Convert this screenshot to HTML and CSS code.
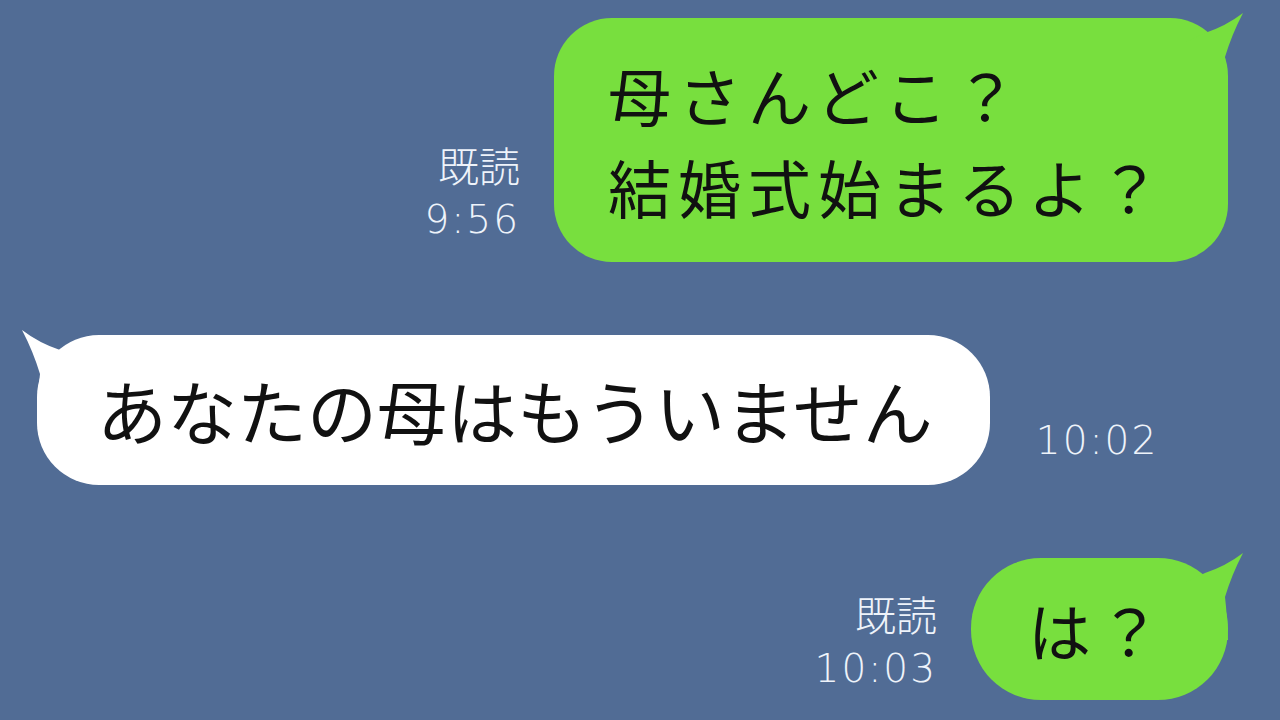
FILE: index.html
```html
<!DOCTYPE html>
<html lang="ja">
<head>
    <meta charset="UTF-8">
    <meta name="viewport" content="width=device-width, initial-scale=1.0">
    <title>トーク</title>
    <link rel="stylesheet" href="styles.css">
</head>
<body>
    <main class="chat">
        <div class="row row-out">
            <div class="meta meta-first">
                <span>既読</span>
                <span>9:56</span>
            </div>
            <div class="bubble bubble-out bubble-big">
                <svg class="tail tail-right" viewBox="0 0 70 90" width="70" height="90">
                    <path d="M10 30 L29 21 Q50 14 67 1 Q56 22 49 45 Q51 62 52 88 L10 88 Z"/>
                </svg>
                母さんどこ？<br>結婚式始まるよ？
            </div>
        </div>

        <div class="row row-in">
            <div class="bubble bubble-in">
                <svg class="tail tail-left" viewBox="0 0 70 90" width="70" height="90">
                    <path d="M60 30 L41 21 Q20 14 3 1 Q14 22 21 45 Q19 62 18 88 L60 88 Z"/>
                </svg>
                あなたの母はもういません
            </div>
            <div class="meta meta-in">10:02</div>
        </div>

        <div class="row row-out">
            <div class="meta meta-last">
                <span>既読</span>
                <span>10:03</span>
            </div>
            <div class="bubble bubble-out bubble-small">
                <svg class="tail tail-right" viewBox="0 0 70 90" width="70" height="90">
                    <path d="M10 30 L29 21 Q50 14 67 1 Q56 22 49 45 Q51 62 52 88 L10 88 Z"/>
                </svg>
                は？
            </div>
        </div>
    </main>
</body>
</html>
```

FILE: styles.css
```css
body {
    margin: 0;
    height: 720px;
    overflow: hidden;
    background-color: #516c95;
    font-family: "Noto Sans CJK JP", "Noto Sans", sans-serif;
}
.chat {
    display: flex;
    flex-direction: column;
    gap: 73px;
    padding-top: 18px;
}
.row {
    display: flex;
    align-items: flex-end;
}
.row-out {
    justify-content: flex-end;
    gap: 34px;
    padding-right: 52px;
}
.row-in {
    gap: 46px;
    padding-left: 37px;
}
.meta {
    display: flex;
    flex-direction: column;
    align-items: flex-end;
    color: #eef3fa;
    font-family: "DejaVu Sans", "Noto Sans CJK JP", sans-serif;
    font-weight: 200;
    font-size: 39px;
    letter-spacing: 2px;
    line-height: 52px;
}
.meta span:first-child {
    font-size: 41px;
    letter-spacing: 0;
}
.meta-first {
    margin-bottom: 16px;
}
.meta-in {
    margin-bottom: 18px;
}
.meta-last {
    margin-bottom: 5px;
}
.bubble {
    position: relative;
    color: #111;
}
.bubble-out {
    background-color: #78df3e;
    font-size: 63px;
    letter-spacing: 7px;
    line-height: 92px;
}
.bubble-big {
    padding: 30px 60px 30px 54px;
    border-radius: 58px;
}
.bubble-small {
    padding: 25px 60px 25px 57px;
    border-radius: 70px;
}
.bubble-in {
    background-color: #fff;
    font-size: 70px;
    line-height: 90px;
    padding: 30px 57px 30px 60px;
    border-radius: 62px;
}
.tail {
    position: absolute;
    top: -6px;
}
.tail-right {
    right: -18px;
    fill: #78df3e;
}
.tail-left {
    left: -18px;
    fill: #fff;
}
```
